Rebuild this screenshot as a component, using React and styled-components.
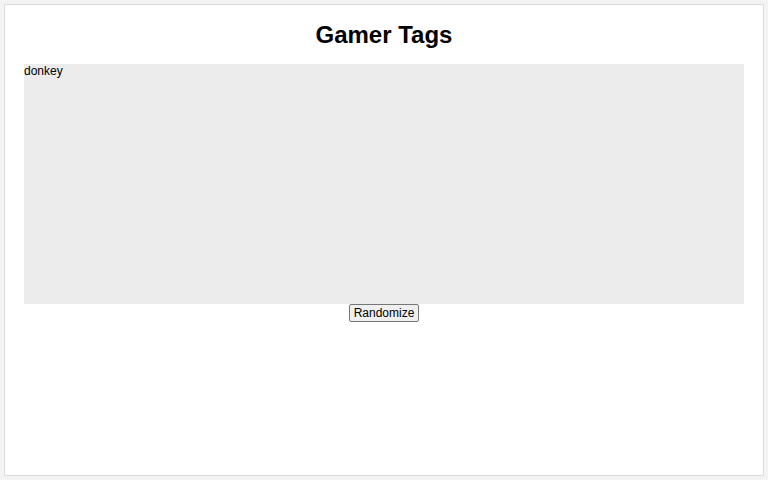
import styled, { createGlobalStyle } from "styled-components";

const GlobalStyle = createGlobalStyle`
  body {
    margin: 0;
    background: #f3f3f3;
    font-family: "Liberation Sans", Arial, sans-serif;
  }
`;

const Page = styled.div`
  padding: 4px;
  height: 480px;
  box-sizing: border-box;
`;

const Card = styled.div`
  height: 472px;
  box-sizing: border-box;
  background: #fff;
  border: 1px solid #dddddd;
  display: flex;
  flex-direction: column;
  align-items: center;
`;

const Title = styled.h1`
  font-size: 24px;
  font-weight: bold;
  margin: 16px 0 15px;
  color: #000;
`;

const TagBox = styled.div`
  width: 720px;
  height: 240px;
  background: #ececec;
  font-size: 12px;
  line-height: 14px;
  color: #000;
`;

const Button = styled.button`
  font-family: "Liberation Sans", Arial, sans-serif;
  font-size: 12px;
  line-height: 14px;
  padding: 1px 4px;
  color: #000;
  background: #efefef;
  border: 1px solid #767676;
  border-radius: 2px;
  cursor: pointer;
`;

const App = () => {
  return (
    <Page>
      <GlobalStyle />
      <Card>
        <Title>Gamer Tags</Title>
        <TagBox>donkey</TagBox>
        <Button>Randomize</Button>
      </Card>
    </Page>
  );
};

export default App;
